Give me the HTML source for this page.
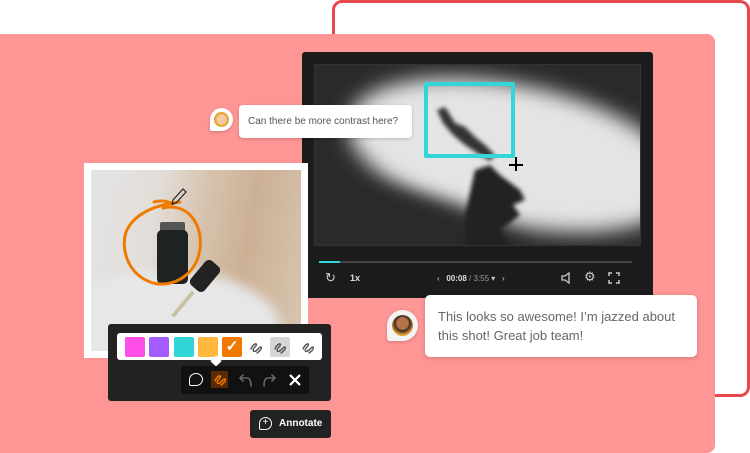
<!DOCTYPE html>
<html><head><style>
*{margin:0;padding:0;box-sizing:border-box}
body{width:750px;height:453px;background:#fff;position:relative;overflow:hidden;font-family:"Liberation Sans",sans-serif}
.a{position:absolute}
</style></head><body>
<div class="a" style="left:332px;top:0;width:418px;height:397px;border:3px solid #e8474b;border-radius:10px"></div>
<div class="a" style="left:0;top:34px;width:715px;height:419px;background:#ff9696;border-radius:0 8px 8px 0"></div>
<!-- player -->
<div class="a" style="left:302px;top:52px;width:351px;height:246px;background:#1c1c1c;border-radius:3px"></div>
<div class="a" style="left:314px;top:64px;width:327px;height:182px;background:#2a2a2a;overflow:hidden;border:1px solid #333">
 <div class="a" style="left:30px;top:20px;width:340px;height:140px;border-radius:50%;background:#e4e4e4;transform:rotate(12deg);filter:blur(10px)"></div>
 <div class="a" style="left:-40px;top:130px;width:260px;height:100px;border-radius:50%;background:#2a2a2a;filter:blur(10px);transform:rotate(12deg)"></div>
 <svg class="a" style="left:0;top:0;filter:blur(2px)" width="327" height="182"><path d="M160 105 L175 100 L185 110 L205 125 L210 135 L198 140 L205 150 L195 158 L185 165 L195 182 L150 182 L150 150 Z" fill="#222"/><path d="M122 45 L130 42 L140 58 L150 62 L160 72 L170 80 L180 90 L175 96 L162 88 L150 80 L138 70 L128 58Z" fill="#333"/></svg>
</div>
<div class="a" style="left:424px;top:82px;width:91px;height:76px;border:4px solid #33d6d6;border-radius:2px"></div>
<div class="a" style="left:509px;top:164px;width:14px;height:1.5px;background:#000"></div>
<div class="a" style="left:515px;top:157px;width:1.5px;height:14px;background:#000"></div>
<div class="a" style="left:319px;top:261px;width:313px;height:2px;background:#444"></div>
<div class="a" style="left:319px;top:261px;width:21px;height:2px;background:#33d6d6"></div>
<div class="a" style="left:325px;top:270px;color:#ccc;font-size:13px">↻</div>
<div class="a" style="left:350px;top:273px;color:#ddd;font-size:9px;font-weight:bold">1x</div>
<div class="a" style="left:437px;top:274px;color:#ccc;font-size:8px">‹ &nbsp; <b style="color:#ddd">00:08</b> <span style="color:#999">/ 3:55</span> ▾ &nbsp; ›</div>
<svg class="a" style="left:560px;top:272px" width="12" height="12"><path d="M2 4 H5 L9 1 V11 L5 8 H2Z" fill="none" stroke="#ccc" stroke-width="1.3"/></svg>
<div class="a" style="left:584px;top:269px;color:#ccc;font-size:13px">⚙</div>
<svg class="a" style="left:608px;top:272px" width="12" height="12"><path d="M1 4 V1 H4 M8 1 H11 V4 M11 8 V11 H8 M4 11 H1 V8" fill="none" stroke="#ccc" stroke-width="1.5"/></svg>
<!-- left comment -->
<div class="a" style="left:210px;top:108px;width:23px;height:23px;background:#fff;border-radius:50% 50% 50% 2px;box-shadow:0 1px 3px rgba(0,0,0,.2)"><div style="margin:4px;width:15px;height:15px;border-radius:50%;background:radial-gradient(circle,#f3c9a6 40%,#e6a32a 60%)"></div></div>
<div class="a" style="left:239px;top:105px;width:173px;height:33px;background:#fff;border-radius:4px;box-shadow:0 1px 3px rgba(0,0,0,.2);font-size:10px;color:#555;padding:11px 0 0 9px">Can there be more contrast here?</div>
<!-- photo -->
<div class="a" style="left:84px;top:163px;width:224px;height:195px;background:#fff"></div>
<div class="a" style="left:91px;top:170px;width:210px;height:181px;background:linear-gradient(100deg,#e4e4e6 0%,#e2ddd8 30%,#d6c3ad 50%,#cbb095 70%,#d8c6b0 100%);overflow:hidden">
 <div class="a" style="left:-40px;top:100px;width:230px;height:120px;background:#e7e7e8;border-radius:50%;filter:blur(6px)"></div>
 <div class="a" style="left:69px;top:52px;width:25px;height:10px;background:#555;border-radius:2px"></div>
 <div class="a" style="left:66px;top:60px;width:31px;height:54px;background:#1f2222;border-radius:5px"></div>
 <div class="a" style="left:105px;top:90px;width:18px;height:32px;background:#222;border-radius:5px;transform:rotate(40deg)"></div>
 <div class="a" style="left:90px;top:118px;width:4px;height:32px;background:#c9c2a0;transform:rotate(40deg)"></div>
</div>
<svg class="a" style="left:118px;top:180px" width="90" height="110"><path d="M45 28 C70 22 85 45 82 68 C79 95 55 108 35 103 C12 96 2 72 8 52 C15 35 35 25 62 22 M55 24 C50 21 42 20 36 22" fill="none" stroke="#f07a00" stroke-width="3" stroke-linecap="round"/><path d="M55 20 L65 9 L68 12 L58 23 L54 24Z" fill="none" stroke="#222" stroke-width="1.2"/></svg>
<!-- toolbar -->
<div class="a" style="left:108px;top:324px;width:223px;height:77px;background:#222;border-radius:3px"></div>
<div class="a" style="left:117px;top:333px;width:205px;height:27px;background:#fff;border-radius:3px"></div>
<div class="a" style="left:125px;top:337px;width:20px;height:20px;background:#ff4fe9;border-radius:2px"></div>
<div class="a" style="left:149px;top:337px;width:20px;height:20px;background:#a25cff;border-radius:2px"></div>
<div class="a" style="left:174px;top:337px;width:20px;height:20px;background:#33d6d6;border-radius:2px"></div>
<div class="a" style="left:198px;top:337px;width:20px;height:20px;background:#ffb83d;border-radius:2px"></div>
<div class="a" style="left:222px;top:337px;width:20px;height:20px;background:#f07a00;border-radius:2px;color:#fff;font-size:15px;text-align:center;line-height:20px;font-weight:bold">✓</div>
<div class="a" style="left:270px;top:337px;width:20px;height:20px;background:#d6d6d6;border-radius:2px"></div>
<svg class="a" style="left:246px;top:337px" width="76" height="20"><g fill="none" stroke="#555" stroke-width="1.4" stroke-linecap="round"><path d="M5 12 C8 5 13 6 9 10 C5 14 8 17 13 11 C16 8 17 12 11 16"/><path d="M29 12 C32 5 37 6 33 10 C29 14 32 17 37 11 C40 8 41 12 35 16"/><path d="M57 12 C60 5 65 6 61 10 C57 14 60 17 65 11 C68 8 69 12 63 16"/></g></svg>
<div class="a" style="left:212px;top:357px;width:8px;height:8px;background:#fff;transform:rotate(45deg)"></div>
<div class="a" style="left:181px;top:366px;width:128px;height:28px;background:#111;border-radius:3px"></div>
<div class="a" style="left:189px;top:373px;width:14px;height:13px;border:1.5px solid #fff;border-radius:50% 50% 50% 2px"></div>
<div class="a" style="left:211px;top:371px;width:17px;height:17px;background:#5a2a06"></div>
<svg class="a" style="left:211px;top:371px" width="17" height="17"><path d="M4 10 C7 3 12 4 8 8 C4 12 7 15 12 9 C15 6 16 10 10 14" stroke="#f07a00" stroke-width="1.4" fill="none" stroke-linecap="round"/></svg>
<svg class="a" style="left:236px;top:371px" width="18" height="18"><path d="M4 7 H11 C14 7 15 10 15 15 M4 7 L7 4 M4 7 L7 10" fill="none" stroke="#666" stroke-width="1.6" stroke-linecap="round"/></svg>
<svg class="a" style="left:261px;top:371px" width="18" height="18"><path d="M14 7 H7 C4 7 3 10 3 15 M14 7 L11 4 M14 7 L11 10" fill="none" stroke="#666" stroke-width="1.6" stroke-linecap="round"/></svg>
<svg class="a" style="left:288px;top:373px" width="14" height="14"><path d="M2 2 L12 12 M12 2 L2 12" stroke="#fff" stroke-width="2.2"/></svg>
<div class="a" style="left:250px;top:410px;width:81px;height:28px;background:#222;border-radius:3px;color:#fff;font-size:10px;font-weight:bold;padding:8px 0 0 29px">Annotate</div>
<div class="a" style="left:259px;top:417px;width:13px;height:13px;border:1.5px solid #fff;border-radius:50% 50% 50% 2px;color:#fff;font-size:10px;line-height:10px;text-align:center">+</div>
<!-- right comment -->
<div class="a" style="left:387px;top:310px;width:31px;height:31px;background:#f3f3f3;border-radius:50% 50% 50% 3px;box-shadow:0 1px 3px rgba(0,0,0,.2)"><div style="margin:5px;width:21px;height:21px;border-radius:50%;background:radial-gradient(circle at 50% 40%,#b5734a 35%,#3a2a1a 45%,#e3a23a 70%)"></div></div>
<div class="a" style="left:425px;top:295px;width:272px;height:62px;background:#fff;border-radius:5px;box-shadow:0 1px 4px rgba(0,0,0,.2);font-size:13px;color:#666;padding:12px 0 0 13px;line-height:19px">This looks so awesome! I’m jazzed about<br>this shot! Great job team!</div>
</body></html>
